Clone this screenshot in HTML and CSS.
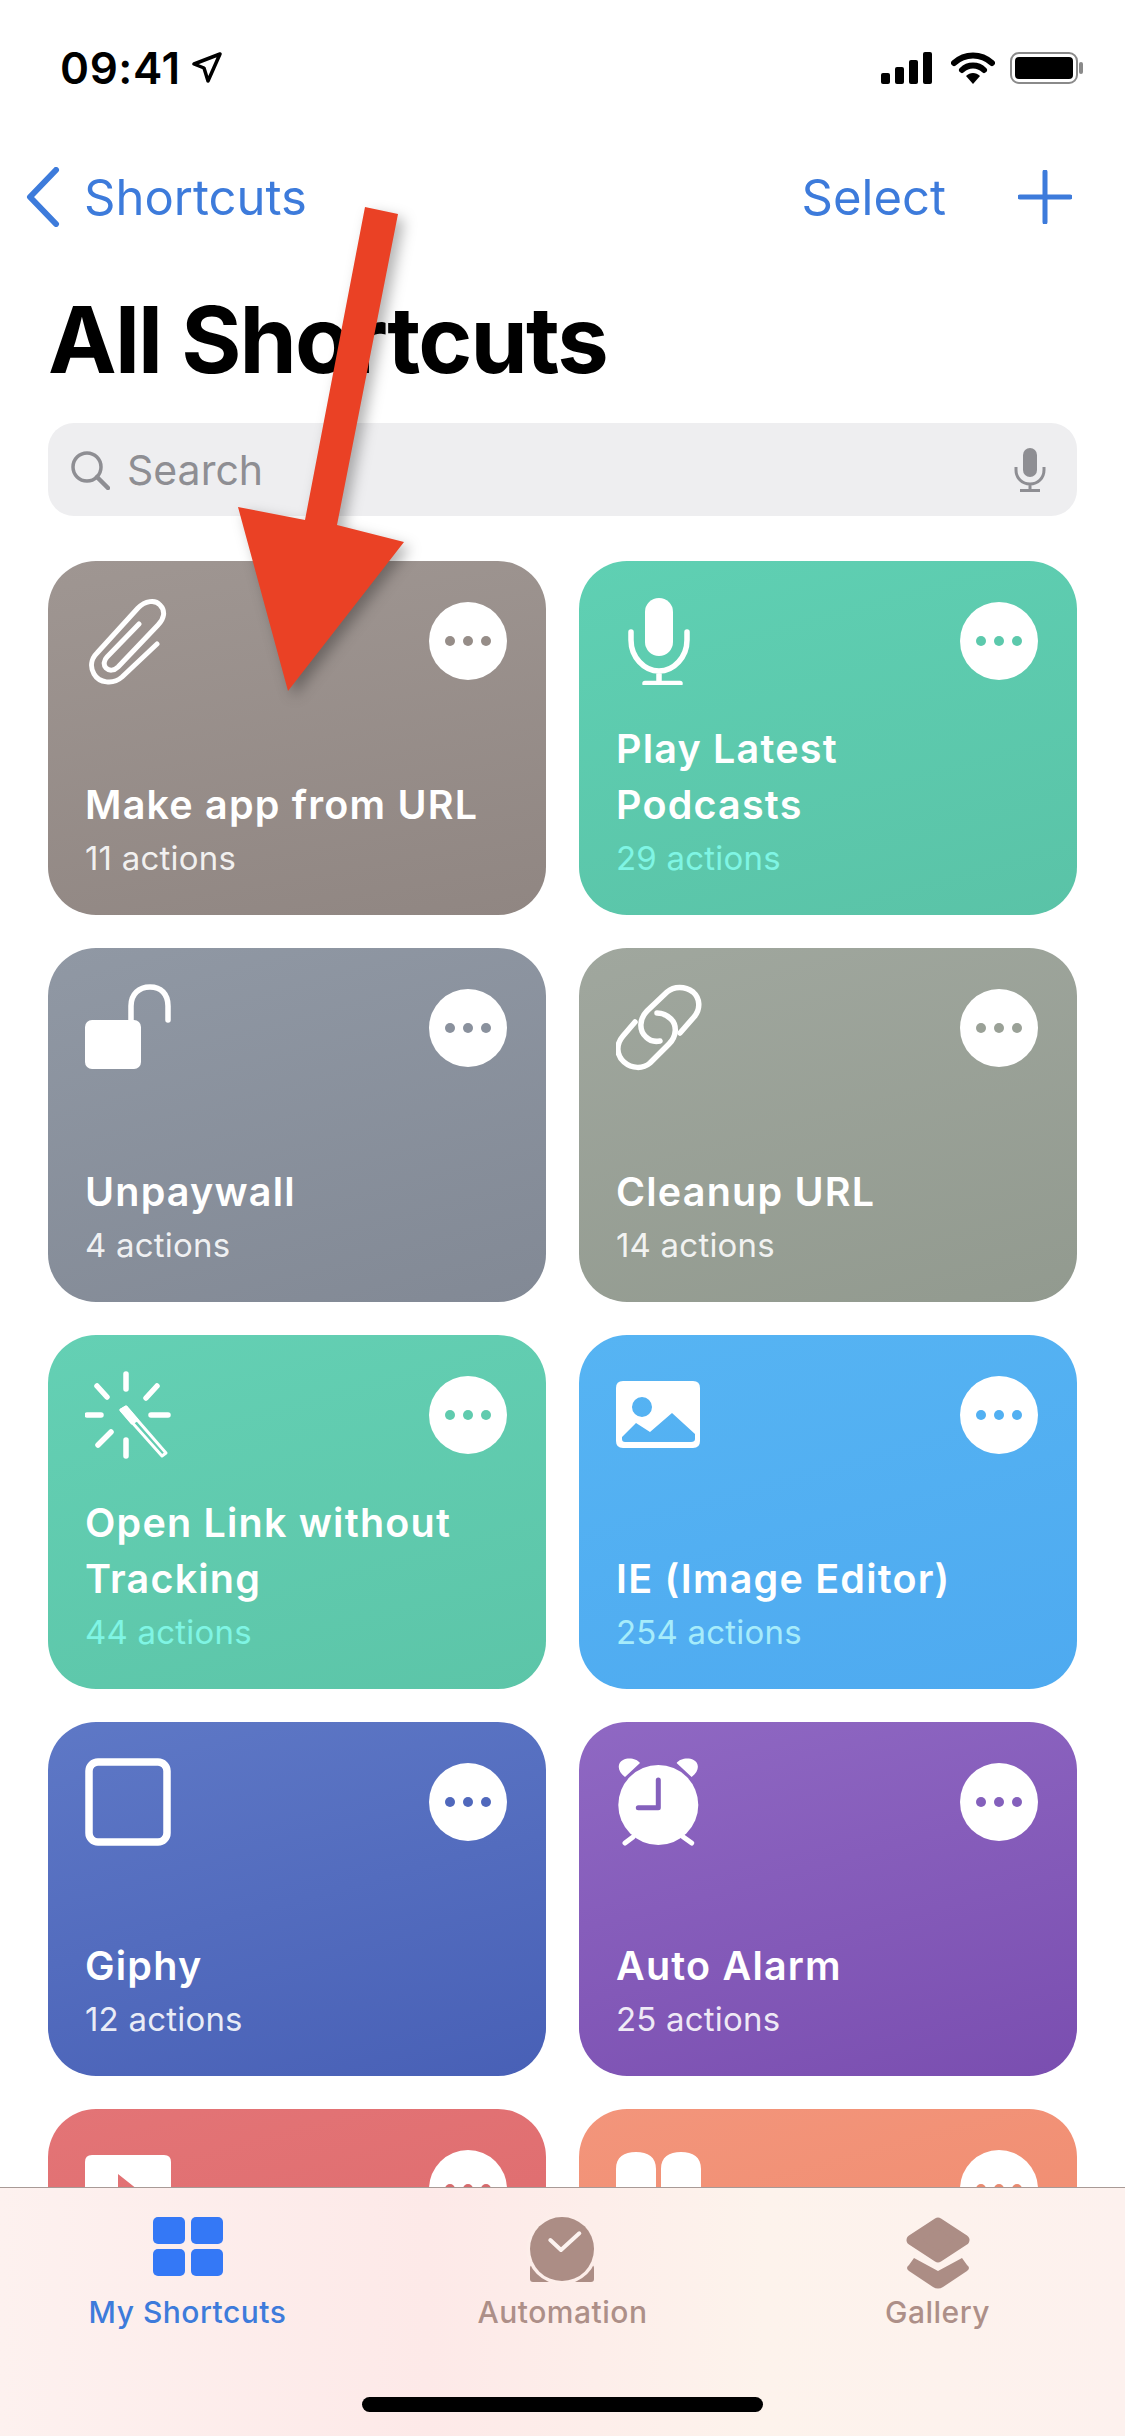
FILE: index.html
```html
<!DOCTYPE html>
<html lang="en">
<head>
<meta charset="utf-8">
<title>All Shortcuts</title>
<link rel="stylesheet" href="styles.css">
</head>
<body>
<div class="phone">
  <header class="status">
    <div class="time"><span>09:41</span>
      <svg class="loc" viewBox="0 0 30 32"><path d="M2 12 L28 2 L16 29 L12 16 Z" fill="none" stroke="#000" stroke-width="3.500" stroke-linejoin="round"/></svg>
    </div>
    <div class="sys">
      <svg class="signal" viewBox="0 0 51 32"><rect x="0" y="21" width="9" height="11" rx="2"/><rect x="14" y="15" width="9" height="17" rx="2"/><rect x="28" y="8" width="9" height="24" rx="2"/><rect x="42" y="0" width="9" height="32" rx="2"/></svg>
      <svg class="wifi" viewBox="0 0 44 32"><path d="M3 11 C14 1 30 1 41 11" fill="none" stroke="#000" stroke-width="6" stroke-linecap="round"/><path d="M11 18 C17 12 27 12 33 18" fill="none" stroke="#000" stroke-width="6" stroke-linecap="round"/><path d="M22 32 L15 24 C19 20 25 20 29 24 Z"/></svg>
      <svg class="battery" viewBox="0 0 73 32"><rect x="1" y="1" width="66" height="30" rx="8" fill="none" stroke="#8a8a8a" stroke-width="2"/><rect x="5" y="5" width="58" height="22" rx="4"/><rect x="69" y="10" width="4" height="12" rx="2" fill="#8a8a8a"/></svg>
    </div>
  </header>

  <nav class="navbar">
    <div class="back">
      <svg class="chev" viewBox="0 0 34 60"><path d="M30 3 L4 30 L30 57" fill="none" stroke="#3d7bdb" stroke-width="6" stroke-linecap="round" stroke-linejoin="round"/></svg>
      <span>Shortcuts</span>
    </div>
    <div class="actions">
      <span>Select</span>
      <svg class="plus" viewBox="0 0 54 54"><path d="M27 2 V52 M2 27 H52" stroke="#3d7bdb" stroke-width="5" stroke-linecap="round"/></svg>
    </div>
  </nav>

  <h1 class="title">All Shortcuts</h1>

  <div class="search">
    <svg class="glass" viewBox="0 0 40 40"><circle cx="17" cy="17" r="14" fill="none" stroke="#8e8e93" stroke-width="3.500"/><path d="M27 27 L38 38" stroke="#8e8e93" stroke-width="4.500" stroke-linecap="round"/></svg>
    <span class="search-text">Search</span>
    <svg class="search-mic" viewBox="0 0 32 44"><rect x="9" y="0" width="14" height="29" rx="7" fill="#8e8e93"/><path d="M2 19 V22 C2 30 8 36 16 36 C24 36 30 30 30 22 V19 M16 36 V42 M6 42.500 H26" fill="none" stroke="#8e8e93" stroke-width="3"/></svg>
  </div>

  <main class="content">
    <div class="grid">
      <article class="card stone">
        <div class="card-top">
          <svg class="icon" viewBox="0 0 86 88"><path d="M72 47 L37 80 C28 88 14 86 9 77 C5 70 6 62 12 56 L53 11 C60 4 70 2 75 8 C81 14 79 22 73 28 L33 70 C29 74 24 74 21 71 C18 68 19 63 22 60 L54 27" fill="none" stroke="#fff" stroke-width="5" stroke-linecap="round" stroke-linejoin="round"/></svg>
          <div class="more"><i></i><i></i><i></i></div>
        </div>
        <div class="card-text"><h2>Make app from URL</h2><p>11 actions</p></div>
      </article>
      <article class="card mint">
        <div class="card-top">
          <svg class="icon" viewBox="0 0 86 88"><rect x="29" y="1" width="28" height="58" rx="14" fill="#fff"/><path d="M15 35 V43 C15 60 28 74 43 74 C58 74 71 60 71 43 V35 M43 74 V86 M29 86.500 H64" fill="none" stroke="#fff" stroke-width="5.500" stroke-linecap="round"/></svg>
          <div class="more"><i></i><i></i><i></i></div>
        </div>
        <div class="card-text"><h2>Play Latest Podcasts</h2><p>29 actions</p></div>
      </article>

      <article class="card slate">
        <div class="card-top">
          <svg class="icon" viewBox="0 0 86 88"><rect x="0" y="36" width="56" height="49" rx="7" fill="#fff"/><path d="M46 38 V22 C46 10 54 3 65 3 C76 3 83 10 83 22 V36" fill="none" stroke="#fff" stroke-width="5.500" stroke-linecap="round"/></svg>
          <div class="more"><i></i><i></i><i></i></div>
        </div>
        <div class="card-text"><h2>Unpaywall</h2><p>4 actions</p></div>
      </article>
      <article class="card sage">
        <div class="card-top">
          <svg class="icon" viewBox="0 0 86 88"><g fill="none" stroke="#fff" stroke-width="5.500" stroke-linecap="round"><path d="M64 49 L78 33 C85 25 84 14 77 8 C69 2 58 2 51 8 L31 27 C23 35 23 47 30 53 C34 57 39 58 44 57"/><path d="M19 38 L7 52 C0 60 0 71 8 78 C16 85 27 85 34 79 L53 60 C61 52 61 41 55 35 C51 31 46 29 41 29"/></g></svg>
          <div class="more"><i></i><i></i><i></i></div>
        </div>
        <div class="card-text"><h2>Cleanup URL</h2><p>14 actions</p></div>
      </article>

      <article class="card jade">
        <div class="card-top">
          <svg class="icon" viewBox="0 0 86 88"><path d="M41 3 V18 M12 15 L22 26 M72 15 L61 27 M2 44 H16 M66 44 H83 M26 61 L13 74 M41 69 V85" fill="none" stroke="#fff" stroke-width="5.500" stroke-linecap="round"/><path d="M36 39 L41 36 L81 82 L77 85 Z" fill="none" stroke="#fff" stroke-width="3" stroke-linejoin="round"/><path d="M36 39 L41 36 L52 49 L47 52 Z" fill="#fff" stroke="#fff" stroke-width="3" stroke-linejoin="round"/></svg>
          <div class="more"><i></i><i></i><i></i></div>
        </div>
        <div class="card-text"><h2>Open Link without Tracking</h2><p>44 actions</p></div>
      </article>
      <article class="card sky">
        <div class="card-top">
          <svg class="icon" viewBox="0 0 86 88"><path fill="#fff" fill-rule="evenodd" d="M7 10 H77 Q84 10 84 17 V70 Q84 77 77 77 H7 Q0 77 0 70 V17 Q0 10 7 10 Z M26 26 A10 10 0 1 0 26 46 A10 10 0 1 0 26 26 Z M56 42 L34 61 L20 52 L6 66 V68 Q6 71 9 71 H75 Q79 71 79 68 V63 Z"/></svg>
          <div class="more"><i></i><i></i><i></i></div>
        </div>
        <div class="card-text"><h2>IE (Image Editor)</h2><p>254 actions</p></div>
      </article>

      <article class="card indigo">
        <div class="card-top">
          <svg class="icon" viewBox="0 0 86 88"><rect x="4" y="4" width="78" height="80" rx="9" fill="none" stroke="#fff" stroke-width="7.500"/></svg>
          <div class="more"><i></i><i></i><i></i></div>
        </div>
        <div class="card-text"><h2>Giphy</h2><p>12 actions</p></div>
      </article>
      <article class="card violet">
        <div class="card-top">
          <svg class="icon" viewBox="0 0 86 88"><circle cx="42.300" cy="47" r="40" fill="#fff"/><path d="M9 19 C1 13 1 5 7 2 C13 -1 21 1 24 5 Z M75.600 19 C83.600 13 83.600 5 77.600 2 C71.600 -1 63.600 1 60.600 5 Z" fill="#fff"/><path d="M17 79 L9 85 M67.300 79 L75.700 85" stroke="#fff" stroke-width="5" stroke-linecap="round"/><path d="M42.300 22 V49.700 H22.300" fill="none" stroke="#8460bc" stroke-width="5" stroke-linecap="round" stroke-linejoin="round"/></svg>
          <div class="more"><i></i><i></i><i></i></div>
        </div>
        <div class="card-text"><h2>Auto Alarm</h2><p>25 actions</p></div>
      </article>

      <article class="card rose">
        <div class="card-top">
          <svg class="icon" viewBox="0 0 86 88"><path fill="#fff" fill-rule="evenodd" d="M7 10 H79 Q86 10 86 17 V88 H0 V17 Q0 10 7 10 Z M33 29 V75 L62 52 Z"/></svg>
          <div class="more"><i></i><i></i><i></i></div>
        </div>
      </article>
      <article class="card coral">
        <div class="card-top">
          <svg class="icon" viewBox="0 0 86 88"><path fill="#fff" d="M0 88 V24 C0 12 8 7 20 7 C32 7 40 12 40 24 V88 Z M45 88 V24 C45 12 53 7 65 7 C77 7 85 12 85 24 V88 Z"/></svg>
          <div class="more"><i></i><i></i><i></i></div>
        </div>
      </article>
    </div>
  </main>

  <footer class="tabbar">
    <div class="tabs">
      <div class="tab active">
        <svg class="tab-icon" viewBox="0 0 74 74"><rect x="2" y="0" width="32" height="27" rx="5" fill="#3478f6"/><rect x="40" y="0" width="32" height="27" rx="5" fill="#3478f6"/><rect x="2" y="32" width="32" height="27" rx="5" fill="#3478f6"/><rect x="40" y="32" width="32" height="27" rx="5" fill="#3478f6"/></svg>
        <span>My Shortcuts</span>
      </div>
      <div class="tab">
        <svg class="tab-icon" viewBox="0 0 74 74"><rect x="4" y="48" width="64" height="17" rx="3" fill="#ac8d85"/><circle cx="36" cy="32" r="35.500" fill="#fdeeea"/><circle cx="36" cy="32" r="32" fill="#ac8d85"/><path d="M24.300 23 L35 33 L53.300 16.300" fill="none" stroke="#fdf3f0" stroke-width="4" stroke-linecap="round" stroke-linejoin="round"/></svg>
        <span>Automation</span>
      </div>
      <div class="tab">
        <svg class="tab-icon" viewBox="0 0 74 74"><polygon points="37,6 63,23 37,40 11,23" fill="#ac8d85" stroke="#ac8d85" stroke-width="11" stroke-linejoin="round"/><path d="M13 41 L37 54 L61 41 L66 48 Q70 51 66 54 L42 70 Q37 73 32 70 L8 54 Q4 51 8 48 Z" fill="#ac8d85"/></svg>
        <span>Gallery</span>
      </div>
    </div>
    <div class="home"></div>
  </footer>

  <svg class="arrow" viewBox="0 0 1125 720"><polygon points="365,207 398,214 337,525 404,542 288,691 238,507 305,520" fill="#ea4125"/></svg>
</div>
</body>
</html>
```

FILE: styles.css
```css
* { box-sizing: border-box; margin: 0; padding: 0; }
html, body { width: 1125px; height: 2436px; overflow: hidden; background: #fff; }
body { font-family: Inter, "Liberation Sans", sans-serif; color: #000; }

.phone { position: relative; width: 1125px; height: 2436px; display: flex; flex-direction: column; overflow: hidden; background: #fff; }

.status { height: 136px; flex: none; display: flex; justify-content: space-between; align-items: center; padding: 0 42px 0 60px; }
.time { display: flex; align-items: center; gap: 11px; font-weight: 600; font-size: 44px; letter-spacing: .6px; }
.loc { width: 30px; height: 32px; }
.sys { display: flex; align-items: center; gap: 19px; }
.signal { width: 51px; height: 32px; }
.wifi { width: 44px; height: 32px; }
.battery { width: 73px; height: 32px; margin-left: -4px; }

.navbar { height: 122px; flex: none; display: flex; justify-content: space-between; align-items: center; padding: 0 53px 0 26px; color: #3d7bdb; font-size: 49px; }
.back { display: flex; align-items: center; gap: 24px; }
.chev { width: 34px; height: 60px; }
.actions { display: flex; align-items: center; gap: 72px; }
.plus { width: 54px; height: 54px; }

.title { height: 165px; flex: none; padding: 0 48px 0; font-size: 92px; line-height: 164px; font-weight: 700; letter-spacing: -1.800px; }

.search { height: 93px; flex: none; margin: 0 48px; background: #eeeef0; border-radius: 26px; display: flex; align-items: center; padding: 0 31px 0 22px; color: #8e8e93; font-size: 41px; }
.glass { width: 40px; height: 40px; }
.search-text { margin-left: 17px; flex: 1; }
.search-mic { width: 32px; height: 44px; }

.content { flex: 1; min-height: 0; overflow: hidden; padding: 45px 48px 0; }
.grid { display: grid; grid-template-columns: 498px 498px; grid-auto-rows: 354px; gap: 33px; }

.card { --tint: #968d88; --sub: rgba(255,255,255,.88); display: flex; flex-direction: column; padding: 36px 39px 32px 37px; border-radius: 48px; color: #fff; }
.card-top { display: flex; justify-content: space-between; align-items: flex-start; }
.icon { width: 86px; height: 88px; flex: none; }
.more { width: 78px; height: 78px; margin-top: 5px; border-radius: 50%; background: #fff; display: flex; align-items: center; justify-content: center; gap: 8px; }
.more i { width: 10px; height: 10px; border-radius: 50%; background: var(--tint); }
.card-text { margin-top: auto; }
.card-text h2 { font-size: 39.500px; font-weight: 600; line-height: 56px; letter-spacing: 1.200px; max-width: 405px; }
.card-text p { font-size: 33px; line-height: 50px; letter-spacing: .2px; color: var(--sub); }

.stone { --tint: #968d88; background: linear-gradient(170deg, #9f9692, #908682); }
.mint { --tint: #5cc9ac; --sub: #7ff5e4; background: linear-gradient(165deg, #5fd0b3, #5ac3a7); }
.slate { --tint: #8a919d; background: linear-gradient(165deg, #9098a4, #828995); }
.sage { --tint: #9aa197; background: linear-gradient(165deg, #a0a79e, #929a8f); }
.jade { --tint: #60cbae; --sub: #7ff5e4; background: linear-gradient(165deg, #64d0b4, #5cc5a8); }
.sky { --tint: #52b0f2; --sub: #a6ecfb; background: linear-gradient(165deg, #56b4f3, #4eaaf0); }
.indigo { --tint: #5068bc; background: linear-gradient(165deg, #5e78c6, #4860b6); }
.violet { --tint: #8460bc; background: linear-gradient(165deg, #8f68c3, #7a4eb0); }
.rose { --tint: #d66a6c; background: linear-gradient(165deg, #e37476, #dc686a); }
.coral { --tint: #e88a70; background: linear-gradient(165deg, #f3957b, #ee886a); }

.tabbar { height: 249px; flex: none; border-top: 1px solid #a89a96; background: linear-gradient(90deg, #fdf1ef 0%, #fde9e8 38%, #fdf3ec 68%, #fdf1ee 100%); display: flex; flex-direction: column; align-items: center; position: relative; z-index: 1; }
.tabs { width: 100%; display: grid; grid-template-columns: repeat(3, 375px); padding-top: 29px; }
.tab { display: flex; flex-direction: column; align-items: center; color: #ad8f88; font-size: 30px; font-weight: 500; letter-spacing: .5px; }
.tab.active { color: #3d7bdb; }
.tab-icon { width: 74px; height: 74px; }
.tab span { margin-top: 1px; line-height: 40px; }
.home { position: absolute; left: 362px; bottom: 24px; width: 401px; height: 15px; border-radius: 8px; background: #000; }

.arrow { position: absolute; left: 0; top: 0; width: 1125px; height: 720px; z-index: 2; filter: drop-shadow(6px 6px 7px rgba(0,0,0,.3)); pointer-events: none; }
```
